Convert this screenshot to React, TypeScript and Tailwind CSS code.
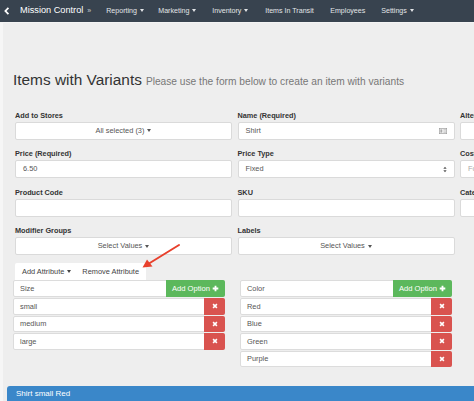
import React from 'react'

const NAV = [
  { label: 'Reporting', w: 'w-[52px]', caret: true },
  { label: 'Marketing', w: 'w-[54px]', caret: true },
  { label: 'Inventory', w: 'w-[53px]', caret: true },
  { label: 'Items In Transit', w: 'w-[65px]', caret: false },
  { label: 'Employees', w: 'w-[51px]', caret: false },
  { label: 'Settings', w: 'w-[60px]', caret: true },
]

function Caret({ className = '' }: { className?: string }) {
  return (
    <span
      className={`inline-block w-0 h-0 border-l-[2.5px] border-r-[2.5px] border-t-[3px] border-l-transparent border-r-transparent border-t-current ${className}`}
    />
  )
}

function Field({ label, children }: { label: string; children: React.ReactNode }) {
  return (
    <div className="flex flex-col min-w-0">
      <div className="text-[7.3px] leading-[9px] font-bold text-[#333] mb-[2px] whitespace-nowrap">{label}</div>
      {children}
    </div>
  )
}

const box = 'h-[18px] bg-white border border-[#dadada] rounded-[2px] flex items-center px-[7px] text-[7.4px] text-[#555]'

function AttrColumn({ name, options, extra = '' }: { name: string; options: string[]; extra?: string }) {
  return (
    <div className={`w-[212px] flex flex-col gap-[1px] ${extra}`}>
      <div className="h-[17px] flex bg-white border border-[#dcdcdc] rounded-[2px]">
        <div className="flex-1 flex items-center pl-[6px] text-[7.4px] text-[#555]">{name}</div>
        <div className="w-[59px] -my-px -mr-px bg-[#5cb85c] rounded-r-[2px] flex items-center justify-center gap-[2px] text-white text-[7.6px]">
          Add Option
          <svg viewBox="0 0 10 10" className="w-[7px] h-[7px]">
            <path d="M5 1v8M1 5h8" stroke="white" strokeWidth={2.6} />
          </svg>
        </div>
      </div>
      {options.map(o => (
        <div key={o} className="h-[16.5px] flex bg-white border border-[#dcdcdc] rounded-[2px]">
          <div className="flex-1 flex items-center pl-[6px] text-[7.4px] text-[#555]">{o}</div>
          <div className="w-[21px] -my-px -mr-px bg-[#d9534f] rounded-r-[2px] flex items-center justify-center">
            <svg viewBox="0 0 10 10" className="w-[6px] h-[6px]">
              <path d="M1.8 1.8l6.4 6.4M8.2 1.8l-6.4 6.4" stroke="white" strokeWidth={2.6} />
            </svg>
          </div>
        </div>
      ))}
    </div>
  )
}

export default function App() {
  return (
    <div className="relative w-[474px] h-[401px] overflow-hidden bg-[#eeeeee] font-['Liberation_Sans',Arial,sans-serif]">
      {/* Navbar */}
      <div className="h-[22px] bg-[#38434f] border-b border-[#f4f4f4] flex items-center text-white box-content">
        <svg viewBox="0 0 10 10" className="w-[8px] h-[8px] ml-[3px]">
          <path d="M6.8 1.2L3 5l3.8 3.8" stroke="white" strokeWidth={2.2} fill="none" />
        </svg>
        <span className="ml-[9px] text-[9.2px]">Mission Control</span>
        <span className="ml-[4px] text-[7px] text-[#ccc]">»</span>
        <div className="ml-[15px] flex text-[7.1px] text-[#e2e5e8]">
          {NAV.map(n => (
            <div key={n.label} className={`${n.w} flex items-center whitespace-nowrap`}>
              {n.label}
              {n.caret && <Caret className="ml-[3px]" />}
            </div>
          ))}
        </div>
      </div>

      <div className="border-l-[3px] border-[#f6f6f6] h-[378px] flex flex-col">
        <div className="pl-[10px] pt-[47px] flex items-baseline whitespace-nowrap leading-[20px]">
          <span className="text-[15.4px] text-[#333]">Items with Variants</span>
          <span className="ml-[4px] text-[10.2px] text-[#777]">Please use the form below to create an item with variants</span>
        </div>

        <div className="pl-[12px] mt-[18.5px] grid grid-cols-[217px_217px_217px] gap-x-[5.5px] gap-y-[9.5px]">
          <Field label="Add to Stores">
            <div className={`${box} justify-center text-[#444]`}>
              All selected (3)<Caret className="ml-[3px]" />
            </div>
          </Field>
          <Field label="Name (Required)">
            <div className={`${box} justify-between`}>
              Shirt
              <svg viewBox="0 0 12 9" className="w-[8px] h-[6px]">
                <rect x="0.5" y="0.5" width="11" height="8" fill="none" stroke="#999" />
                <rect x="2" y="2" width="3" height="5" fill="#aaa" />
                <path d="M6.5 2.5h4M6.5 4.5h4M6.5 6.5h4" stroke="#aaa" />
              </svg>
            </div>
          </Field>
          <Field label="Alternate Name">
            <div className={box} />
          </Field>

          <Field label="Price (Required)">
            <div className={box}>6.50</div>
          </Field>
          <Field label="Price Type">
            <div className={`${box} justify-between`}>
              Fixed
              <svg viewBox="0 0 6 10" className="w-[4px] h-[7px]">
                <path d="M0.5 4L3 1l2.5 3zM0.5 6L3 9l2.5-3z" fill="#555" />
              </svg>
            </div>
          </Field>
          <Field label="Cost">
            <div className={`${box} text-[#aaa]`}>For example 3.00</div>
          </Field>

          <Field label="Product Code">
            <div className={box} />
          </Field>
          <Field label="SKU">
            <div className={box} />
          </Field>
          <Field label="Category">
            <div className={box} />
          </Field>

          <Field label="Modifier Groups">
            <div className={`${box} justify-center text-[#444]`}>
              Select Values<Caret className="ml-[3px]" />
            </div>
          </Field>
          <Field label="Labels">
            <div className={`${box} justify-center text-[#444]`}>
              Select Values<Caret className="ml-[3px]" />
            </div>
          </Field>
          <div />
        </div>

        <div className="ml-[12px] mt-[8px] w-[131px] h-[17px] bg-white rounded-t-[2px] flex items-center text-[7.4px] text-[#444]">
          <span className="ml-[7px] flex items-center">
            Add Attribute<Caret className="ml-[3px]" />
          </span>
          <span className="ml-[11px]">Remove Attribute</span>
        </div>

        <div className="ml-[10px] flex items-start">
          <AttrColumn name="Size" options={['small', 'medium', 'large']} />
          <AttrColumn name="Color" options={['Red', 'Blue', 'Green', 'Purple']} extra="ml-[15px]" />
        </div>

        <div className="ml-[4px] mt-[18.5px] flex-1 bg-[#3a87c9] rounded-tl-[3px] pl-[9px] pt-[3px] text-white text-[8px] leading-[10px]">
          Shirt small Red
        </div>
      </div>

      {/* annotation arrow */}
      <svg className="absolute left-0 top-0 w-[474px] h-[401px] pointer-events-none" viewBox="0 0 474 401">
        <path d="M179 245L149 263.5" stroke="#e8402c" strokeWidth={2} strokeLinecap="round" />
        <path d="M142.5 267.5L147 259.5L152.5 266.5Z" fill="#e8402c" />
      </svg>
    </div>
  )
}
